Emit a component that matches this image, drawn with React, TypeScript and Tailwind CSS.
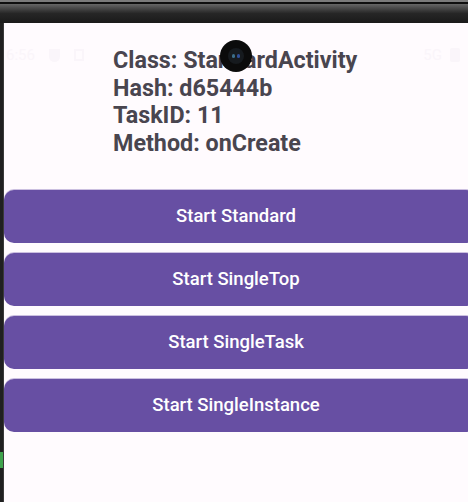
import React from 'react';

const modes = ['Start Standard', 'Start SingleTop', 'Start SingleTask', 'Start SingleInstance'];

const App: React.FC = () => {
    return (
        <div className="relative w-[468px] h-[502px] overflow-hidden bg-[#1d1d1d] flex flex-col font-['Roboto',sans-serif]">
            {/* device bezel */}
            <div className="h-[23px] flex-shrink-0 flex flex-col">
                <div className="h-[2px] bg-[#7a7a7a]" />
                <div className="h-[2px] bg-[#0e0e0e]" />
                <div className="flex-1 bg-gradient-to-b from-[#666666] via-[#262626] to-[#1a1a1a]" />
            </div>

            <div className="flex flex-1 min-h-0">
                <div className="w-[4px] flex-shrink-0 bg-[#202020] border-r border-[#3a3a3a] flex flex-col">
                    <div className="mt-[429px] h-[16px] w-[3px] bg-[#3fa34d]" />
                </div>

                <main className="flex-1 bg-[#fffbfe] overflow-hidden flex flex-col">
                    <div className="pt-[24px] pl-[109px] text-[23.3px] leading-[27.6px] font-bold text-[#49454f]">
                        <p>Class: StandardActivity</p>
                        <p>Hash: d65444b</p>
                        <p>TaskID: 11</p>
                        <p>Method: onCreate</p>
                    </div>

                    <div className="mt-[33px] flex flex-col gap-[10px]">
                        {modes.map((m) => (
                            <button
                                key={m}
                                className="w-[472px] h-[53px] rounded-[10px] bg-[#674fa3] text-white text-[18.5px] font-medium pr-[8px] shadow-[0_-1px_0_#cbbfe0]"
                            >
                                {m}
                            </button>
                        ))}
                    </div>
                </main>
            </div>

            {/* status bar, white over white */}
            <div className="absolute left-[6px] right-0 top-[44px] flex items-center justify-between pr-[8px] text-[15px] text-[#faf5fa]">
                <div className="flex items-center gap-[14px]">
                    <span>6:56</span>
                    <span className="w-[11px] h-[13px] rounded-b-[6px] bg-[#faf5fa]" />
                    <span className="w-[10px] h-[12px] border-2 border-[#faf5fa]" />
                </div>
                <div className="flex items-center gap-[8px]">
                    <span>5G</span>
                    <span className="w-[10px] h-[14px] rounded-[2px] bg-[#faf5fa]" />
                </div>
            </div>

            {/* camera cutout */}
            <div className="absolute left-[220px] top-[40px] w-[32px] h-[32px] rounded-full bg-[#0b0b0b] flex items-center justify-center">
                <div className="w-[16px] h-[16px] rounded-full bg-[#161a1e] flex items-center justify-center gap-[2px]">
                    <span className="w-[3px] h-[4px] rounded-full bg-[#3d6f8a]" />
                    <span className="w-[3px] h-[4px] rounded-full bg-[#2f4f9a]" />
                </div>
            </div>
        </div>
    );
};

export default App;
